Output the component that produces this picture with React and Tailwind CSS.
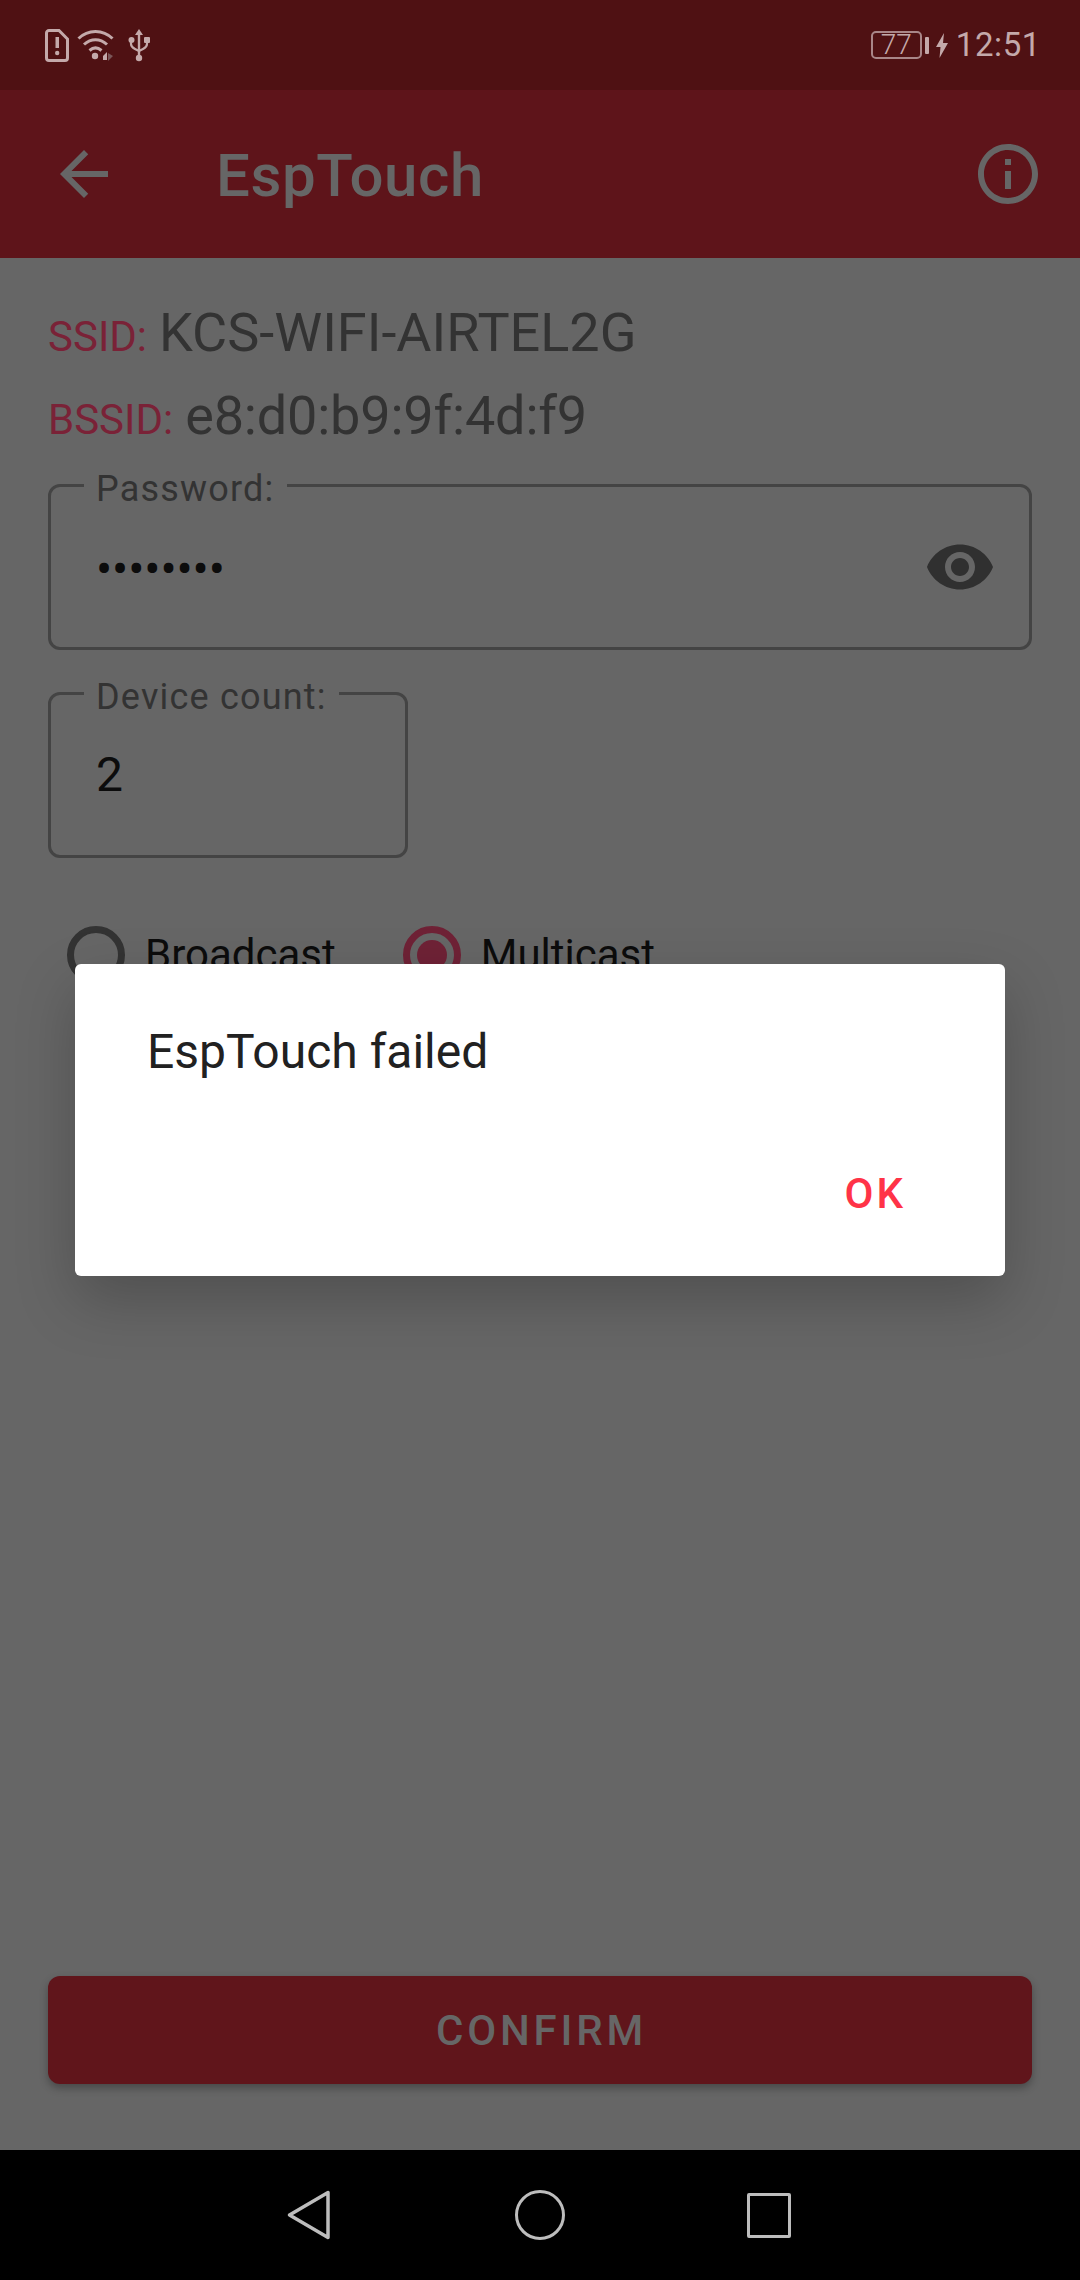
import React from 'react';

// Outlined input with the label sitting on its top border
function OutlinedField({ label, className, children }) {
  return (
    <div className={`relative flex items-center rounded-xl border-[3px] border-[#444444] h-[166px] pl-[45px] ${className}`}>
      <span className="absolute left-[33px] top-[2px] -translate-y-1/2 bg-[#666666] px-[12px] text-[36px] leading-[36px] tracking-[1.2px] text-[#333333]">
        {label}
      </span>
      {children}
    </div>
  );
}

function Radio({ label, checked }) {
  return (
    <div className="flex items-center gap-[20px]">
      <div className={`flex h-[58px] w-[58px] items-center justify-center rounded-full border-[7px] ${checked ? 'border-[#6f2236]' : 'border-[#333333]'}`}>
        {checked && <div className="h-[30px] w-[30px] rounded-full bg-[#6f2236]" />}
      </div>
      <span className="text-[42px] leading-[58px] text-[#0c0c0c]">{label}</span>
    </div>
  );
}

function StatusIcons() {
  return (
    <div className="flex items-center">
      {/* sim alert */}
      <svg width="24" height="33" viewBox="0 0 24 33" className="ml-[45px]">
        <path d="M4 1.5h10l8.5 8.5v19a2.5 2.5 0 0 1-2.5 2.5H4A2.5 2.5 0 0 1 1.5 29V4A2.5 2.5 0 0 1 4 1.5z" fill="none" stroke="#c4a9aa" strokeWidth="3" />
        <rect x="10.5" y="8" width="3.5" height="11" fill="#c4a9aa" />
        <circle cx="12.2" cy="24" r="2.2" fill="#c4a9aa" />
      </svg>
      {/* wifi */}
      <svg width="38" height="33" viewBox="0 0 38 33" className="ml-[8px]">
        <g fill="none" stroke="#c4a9aa" strokeWidth="3">
          <path d="M1.5 9.5C11 0 26 0 35.5 9.5" />
          <path d="M7 15.5c7-6.5 16-6.5 23 0" />
          <path d="M12.5 21.5c4-3.5 8-3.5 12 0" />
        </g>
        <circle cx="18" cy="27" r="3.2" fill="#c4a9aa" />
        <path d="M26 27l4-4v8h-4z" fill="#c4a9aa" />
        <path d="M31 24l5 3-5 5z" fill="#7a5658" />
      </svg>
      {/* usb */}
      <svg width="22" height="34" viewBox="0 0 22 34" className="ml-[13px]">
        <path d="M11 1l4 6H7z" fill="#c4a9aa" />
        <path d="M11 6v22" stroke="#c4a9aa" strokeWidth="2.4" />
        <path d="M3 12v4c0 3 2 4 4 5l4 2 4-2c2-1 4-2 4-5v-4" fill="none" stroke="#c4a9aa" strokeWidth="2.2" />
        <circle cx="3.5" cy="12" r="3" fill="#c4a9aa" />
        <rect x="16" y="9" width="6" height="6" rx="1" fill="#c4a9aa" />
        <circle cx="11" cy="30" r="3.2" fill="#c4a9aa" />
      </svg>
    </div>
  );
}

function BatteryAndClock() {
  return (
    <div className="flex items-center text-[#c4a9aa]">
      <div className="flex h-[28px] w-[51px] items-center justify-center rounded-[5px] border-2 border-[#a98688] text-[28px] leading-none font-light">
        77
      </div>
      <div className="ml-[3px] h-[17px] w-[4px] rounded-[1px] bg-[#c4a9aa]" />
      <svg width="12" height="25" viewBox="0 0 12 25" className="ml-[7px]">
        <path d="M8 0L0 14h4.5L3.5 25 12 10H7z" fill="#c4a9aa" />
      </svg>
      <span className="ml-[8px] mr-[39px] text-[33px] leading-[40px] tracking-[0.6px]">12:51</span>
    </div>
  );
}

export default function App() {
  return (
    <div className="relative flex h-screen w-full flex-col overflow-hidden bg-[#666666] font-['Roboto',sans-serif]">
      <div className="flex h-[90px] items-center justify-between bg-[#4f1113]">
        <StatusIcons />
        <BatteryAndClock />
      </div>

      {/* app bar */}
      <div className="flex h-[168px] items-center bg-[#5e141a]">
        <svg width="72" height="72" viewBox="0 0 24 24" className="ml-[48px]">
          <path d="M20 11H7.83l5.59-5.59L12 4l-8 8 8 8 1.41-1.41L7.83 13H20v-2z" fill="#666666" />
        </svg>
        <span className="ml-[96px] mt-[4px] text-[60px] leading-[72px] font-medium tracking-[0.6px] text-[#666666]">EspTouch</span>
        <svg width="72" height="72" viewBox="0 0 24 24" className="ml-auto mr-[36px]">
          <path d="M11 7h2v2h-2zm0 4h2v6h-2zm1-9C6.48 2 2 6.48 2 12s4.48 10 10 10 10-4.48 10-10S17.52 2 12 2zm0 18c-4.41 0-8-3.59-8-8s3.59-8 8-8 8 3.59 8 8-3.59 8-8 8z" fill="#666666" />
        </svg>
      </div>

      {/* form */}
      <div className="flex flex-1 flex-col px-[48px]">
        <div className="mt-[43px] flex items-baseline leading-[64px]">
          <span className="text-[42px] text-[#7a2237]">SSID:</span>
          <span className="ml-[12px] text-[54px] text-[#333333]">KCS-WIFI-AIRTEL2G</span>
        </div>
        <div className="mt-[15px] flex items-baseline leading-[64px]">
          <span className="text-[42px] text-[#7a2237]">BSSID:</span>
          <span className="ml-[12px] text-[54px] tracking-[-0.18px] text-[#333333]">e8:d0:b9:9f:4d:f9</span>
        </div>

        <OutlinedField label="Password:" className="mt-[32px]">
          <span className="pt-[6px] text-[48px] leading-none tracking-[-0.1px] text-[#0c0c0c]">••••••••</span>
          <svg width="72" height="72" viewBox="0 0 24 24" className="ml-auto mr-[33px]">
            <path d="M12 4.5C7 4.5 2.73 7.61 1 12c1.73 4.39 6 7.5 11 7.5s9.27-3.11 11-7.5c-1.73-4.39-6-7.5-11-7.5zM12 17c-2.76 0-5-2.24-5-5s2.24-5 5-5 5 2.24 5 5-2.24 5-5 5zm0-8c-1.66 0-3 1.34-3 3s1.34 3 3 3 3-1.34 3-3-1.34-3-3-3z" fill="#303030" />
          </svg>
        </OutlinedField>

        <OutlinedField label="Device count:" className="mt-[42px] w-[360px]">
          <span className="text-[48px] leading-none text-[#0c0c0c]">2</span>
        </OutlinedField>

        <div className="mt-[68px] ml-[19px] flex gap-[67px]">
          <Radio label="Broadcast" />
          <Radio label="Multicast" checked />
        </div>

        <button className="mt-auto mb-[66px] h-[108px] rounded-xl bg-[#60151b] pl-[3px] text-[42px] font-medium tracking-[3.8px] text-[#666666] shadow-[0_4px_8px_rgba(0,0,0,0.3)]">
          CONFIRM
        </button>
      </div>

      {/* navigation bar */}
      <div className="flex h-[130px] items-center justify-center bg-black pr-[2px]">
        <svg width="44" height="50" viewBox="0 0 44 50">
          <path d="M41 2.5v45L2.5 25z" fill="none" stroke="#bdbdbd" strokeWidth="3.5" strokeLinejoin="round" />
        </svg>
        <div className="ml-[184px] h-[50px] w-[50px] rounded-full border-[3.5px] border-[#bdbdbd]" />
        <div className="ml-[182px] h-[45px] w-[44px] rounded-[2px] border-[3.5px] border-[#bdbdbd]" />
      </div>

      {/* dialog */}
      <div className="absolute left-[75px] top-[964px] flex h-[312px] w-[930px] flex-col rounded-md bg-white shadow-[0_24px_60px_rgba(0,0,0,0.22)]">
        <p className="ml-[72px] mt-[60px] text-[48px] leading-[56px] text-[#212121]">EspTouch failed</p>
        <span className="ml-auto mr-[99px] mt-[89px] text-[42px] leading-[50px] font-medium tracking-[3px] text-[#ff3347]">OK</span>
      </div>
    </div>
  );
}
